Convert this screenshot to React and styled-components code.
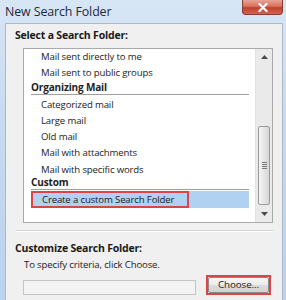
import React from 'react';
import styled, { createGlobalStyle } from 'styled-components';

const Global = createGlobalStyle`
  html, body { margin:0; padding:0; }
  body {
    width:286px;
    height:300px;
    overflow:hidden;
    background:#c9dcf0;
    font-family:"Open Sans", "Noto Sans", sans-serif;
  }
`;

const Frame = styled.div`
  width:286px;
  height:300px;
  box-sizing:border-box;
  display:flex;
  flex-direction:column;
  background:linear-gradient(180deg, #d7e6f5 0%, #c6daef 40%, #bcd3ec 100%);
  padding:0 3px 0 5px;
`;

const TitleBar = styled.div`
  height:23px;
  flex:none;
  display:flex;
  align-items:flex-start;
  justify-content:space-between;
`;

const Title = styled.div`
  font-size:12.4px;
  color:#1e2a38;
  margin-top:3px;
  letter-spacing:-0.1px;
`;

const CloseBtn = styled.div`
  width:41px;
  height:15px;
  box-sizing:border-box;
  border:1px solid #8c3b32;
  border-top:none;
  border-radius:0 0 4px 4px;
  background:linear-gradient(180deg, #e9a496 0%, #d8705f 45%, #c2402c 55%, #d06450 100%);
  display:flex;
  align-items:center;
  justify-content:center;
`;

const Client = styled.div`
  flex:1;
  background:#f0f0f0;
  border:1px solid #a7b9cc;
  border-bottom:none;
  padding:3px 9px 0 9px;
  display:flex;
  flex-direction:column;
`;

const Heading = styled.div`
  font-weight:700;
  font-size:10.5px;
  color:#1a1a1a;
  height:16px;
  line-height:16px;
  margin-top:${p => p.top || 0}px;
  letter-spacing:-0.2px;
`;

const ListBox = styled.div`
  margin:5px 0 0 8px;
  width:250px;
  height:175px;
  box-sizing:border-box;
  border:1px solid #a9a9a9;
  background:#fff;
  display:flex;
`;

const ListContent = styled.div`
  flex:1;
  padding:0 6px 0 7px;
  display:flex;
  flex-direction:column;
`;

const Item = styled.div`
  height:16.3px;
  line-height:16px;
  font-size:9.6px;
  color:#222;
  padding-left:10px;
  letter-spacing:-0.15px;
  white-space:nowrap;
`;

const GroupHeader = styled.div`
  height:12px;
  line-height:12px;
  font-size:10px;
  font-weight:700;
  color:#222;
  margin-top:${p => p.top || 0}px;
  border-bottom:1px solid #a0a0a0;
  padding-bottom:1px;
  margin-bottom:${p => p.bottom || 0}px;
  letter-spacing:-0.15px;
`;

const SelectedRow = styled.div`
  height:17px;
  background:#b0d1f2;
  display:flex;
`;

const RedBox = styled.div`
  box-sizing:border-box;
  border:2px solid #d8464a;
  height:${p => p.h || 17}px;
  display:flex;
  align-items:center;
`;

const SelText = styled.span`
  font-size:9.6px;
  color:#1a1a1a;
  padding:0 13px 0 9px;
  letter-spacing:-0.15px;
  white-space:nowrap;
`;

const ScrollBar = styled.div`
  width:16px;
  flex:none;
  background:#eaeaea;
  border-left:1px solid #e2e2e2;
  display:flex;
  flex-direction:column;
  align-items:center;
`;

const Arrow = styled.div`
  height:16px;
  display:flex;
  align-items:center;
  justify-content:center;
`;

const Track = styled.div`
  flex:1;
  width:100%;
  display:flex;
  flex-direction:column;
  justify-content:flex-end;
  align-items:center;
`;

const Thumb = styled.div`
  width:12px;
  height:79px;
  box-sizing:border-box;
  border:1px solid #9a9a9a;
  border-radius:2px;
  background:linear-gradient(90deg, #f4f4f4 0%, #e6e6e6 50%, #d5d5d5 100%);
  display:flex;
  flex-direction:column;
  align-items:center;
  justify-content:center;
  gap:1px;
  margin-bottom:1px;
`;

const Grip = styled.div`
  width:5px;
  height:1px;
  background:#7a7a7a;
`;

const Divider = styled.div`
  height:0;
  border-top:1px solid #d0d0d0;
  border-bottom:1px solid #fff;
  margin:7px 0 0 1px;
  width:257px;
`;

const Hint = styled.div`
  font-size:9.6px;
  color:#222;
  margin:1px 0 0 9px;
  height:16px;
  line-height:16px;
  letter-spacing:-0.15px;
`;

const BottomRow = styled.div`
  display:flex;
  align-items:center;
  margin:0 0 0 8px;
`;

const Field = styled.div`
  width:173px;
  height:15px;
  box-sizing:border-box;
  border:1px solid #c4c4c4;
  background:#f3f3f3;
  margin-top:7px;
`;

const ButtonWrap = styled.div`
  margin-left:10px;
  margin-top:1px;
`;

const Button = styled.div`
  width:61px;
  height:16px;
  box-sizing:border-box;
  border:1px solid #8a8a8a;
  border-radius:2px;
  background:linear-gradient(180deg, #f6f6f6 0%, #ebebeb 50%, #dcdcdc 51%, #d2d2d2 100%);
  font-size:9.8px;
  color:#1a1a1a;
  display:flex;
  align-items:center;
  justify-content:center;
  letter-spacing:-0.1px;
`;

const UpArrow = () => (
  <svg width="7" height="4" viewBox="0 0 7 4"><path d="M0 4 L3.5 0 L7 4 Z" fill="#4a4a4a" /></svg>
);
const DownArrow = () => (
  <svg width="7" height="4" viewBox="0 0 7 4"><path d="M0 0 L3.5 4 L7 0 Z" fill="#4a4a4a" /></svg>
);

export default function App() {
  return (
    <>
      <Global />
      <Frame>
        <TitleBar>
          <Title>New Search Folder</Title>
          <CloseBtn>
            <svg width="10" height="9" viewBox="0 0 10 9">
              <path d="M1.5 1 L8.5 8 M8.5 1 L1.5 8" stroke="#fff" strokeWidth="2.2" strokeLinecap="square" />
            </svg>
          </CloseBtn>
        </TitleBar>
        <Client>
          <Heading top={0}>Select a Search Folder:</Heading>
          <ListBox>
            <ListContent>
              <Item>Mail sent directly to me</Item>
              <Item>Mail sent to public groups</Item>
              <GroupHeader top={-1} bottom={2}>Organizing Mail</GroupHeader>
              <Item>Categorized mail</Item>
              <Item>Large mail</Item>
              <Item>Old mail</Item>
              <Item>Mail with attachments</Item>
              <Item>Mail with specific words</Item>
              <GroupHeader top={-2} bottom={1}>Custom</GroupHeader>
              <SelectedRow>
                <RedBox h={17}>
                  <SelText>Create a custom Search Folder</SelText>
                </RedBox>
              </SelectedRow>
            </ListContent>
            <ScrollBar>
              <Arrow><UpArrow /></Arrow>
              <Track>
                <Thumb>
                  <Grip /><Grip /><Grip /><Grip />
                </Thumb>
              </Track>
              <Arrow><DownArrow /></Arrow>
            </ScrollBar>
          </ListBox>
          <Divider />
          <Heading top={8}>Customize Search Folder:</Heading>
          <Hint>To specify criteria, click Choose.</Hint>
          <BottomRow>
            <Field />
            <ButtonWrap>
              <RedBox h={20}>
                <Button>Choose...</Button>
              </RedBox>
            </ButtonWrap>
          </BottomRow>
        </Client>
      </Frame>
    </>
  );
}
